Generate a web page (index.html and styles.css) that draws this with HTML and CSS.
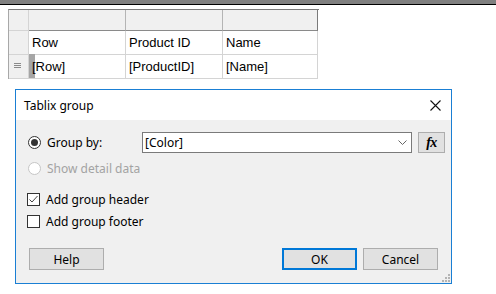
FILE: index.html
```html
<!DOCTYPE html>
<html>
<head>
<meta charset="utf-8">
<link rel="stylesheet" href="styles.css">
</head>
<body>
<div class="topbar"></div>
<div class="tablix">
  <div class="c hdr handle"></div>
  <div class="c hdr"></div>
  <div class="c hdr"></div>
  <div class="c hdr last"></div>
  <div class="c handle"></div>
  <div class="c">Row</div>
  <div class="c">Product ID</div>
  <div class="c last">Name</div>
  <div class="c handle">
    <svg width="7" height="6" viewBox="0 0 7 6"><path d="M0 0.5H7M0 2.5H7M0 4.5H7" stroke="#8a8a8a" stroke-width="1"/></svg>
  </div>
  <div class="c sel"><span class="selbar"></span><span class="seltext">[Row]</span></div>
  <div class="c">[ProductID]</div>
  <div class="c last">[Name]</div>
</div>

<div class="dialog">
  <div class="titlebar">
    <span class="title">Tablix group</span>
    <svg class="close" width="11" height="11" viewBox="0 0 11 11"><path d="M0.5 0.5L10.5 10.5M10.5 0.5L0.5 10.5" stroke="#111" stroke-width="1.1"/></svg>
  </div>
  <div class="body">
    <div class="row r1">
      <span class="radio on"></span>
      <span class="lbl">Group by:</span>
      <div class="combo">
        <span class="combo-text">[Color]</span>
        <svg class="chev" width="9" height="5" viewBox="0 0 9 5"><path d="M0.5 0.5L4.5 4.5L8.5 0.5" stroke="#666" fill="none" stroke-width="1"/></svg>
      </div>
      <div class="fx">fx</div>
    </div>
    <div class="row r2">
      <span class="radio dis"></span>
      <span class="lbl dis-t">Show detail data</span>
    </div>
    <div class="row r3">
      <span class="check">
        <svg width="11" height="11" viewBox="0 0 11 11"><path d="M1.5 5.5L4 8L9.5 2" stroke="#444" fill="none" stroke-width="1"/></svg>
      </span>
      <span class="lbl">Add group header</span>
    </div>
    <div class="row r4">
      <span class="check"></span>
      <span class="lbl">Add group footer</span>
    </div>
    <div class="row buttons">
      <div class="btn">Help</div>
      <div class="spacer"></div>
      <div class="btn ok">OK</div>
      <div class="btn">Cancel</div>
    </div>
    <svg class="grip" width="9" height="9" viewBox="0 0 9 9">
      <rect x="7" y="1" width="2" height="2" fill="#b4b4b4"/>
      <rect x="4" y="4" width="2" height="2" fill="#b4b4b4"/>
      <rect x="7" y="4" width="2" height="2" fill="#b4b4b4"/>
      <rect x="1" y="7" width="2" height="2" fill="#b4b4b4"/>
      <rect x="4" y="7" width="2" height="2" fill="#b4b4b4"/>
      <rect x="7" y="7" width="2" height="2" fill="#b4b4b4"/>
    </svg>
  </div>
</div>
</body>
</html>
```

FILE: styles.css
```css
html, body {
  margin: 0;
  padding: 0;
  background: #fff;
}
body {
  width: 496px;
  height: 294px;
  overflow: hidden;
  font-family: "Segoe UI", "Noto Sans", sans-serif;
}
.topbar {
  height: 4px;
  background: #808080;
  border-bottom: 1px solid #000;
}
.tablix {
  margin: 4px 0 0 8px;
  width: 310px;
  display: grid;
  grid-template-columns: 20px 97px 97px 95px;
  grid-template-rows: 21px 24px 24px;
  border-top: 1px solid #7a7a7a;
  border-left: 1px solid #a8a8a8;
  font-family: "Liberation Sans", Arial, sans-serif;
  font-size: 13px;
  color: #000;
}
.c {
  box-sizing: border-box;
  border-right: 1px solid #d4d4d4;
  border-bottom: 1px solid #d4d4d4;
  display: flex;
  align-items: center;
  padding-left: 3px;
  padding-bottom: 1px;
  position: relative;
}
.c.hdr {
  background: #f0f0f0;
  border-bottom: 1px solid #8a8a8a;
  border-right: 1px solid #b4b4b4;
}
.c.hdr.last {
  border-right: 1px solid #7a7a7a;
}
.c.hdr.handle {
  border-bottom: 1px solid #d4d4d4;
  border-right: 1px solid #d4d4d4;
}
.c.handle {
  background: #f0f0f0;
  padding-left: 5px;
}
.selbar {
  position: absolute;
  left: 0;
  top: -1px;
  width: 6px;
  height: 24px;
  background: #a6a6a6;
}
.seltext {
  position: relative;
}
.dialog {
  margin: 10px 0 0 15px;
  width: 437px;
  height: 195px;
  box-sizing: border-box;
  border: 1px solid #1a7fd4;
  background: #f0f0f0;
  display: flex;
  flex-direction: column;
}
.titlebar {
  height: 30px;
  background: #fff;
  display: flex;
  align-items: center;
  padding-left: 8px;
  padding-right: 10px;
}
.title {
  font-size: 12px;
  color: #000;
  flex: 1;
}
.close {
  display: block;
}
.body {
  position: relative;
  flex: 1;
  padding: 12px 13px 13px 12px;
  display: flex;
  flex-direction: column;
  font-size: 12px;
  color: #000;
}
.row {
  display: flex;
  align-items: center;
}
.r1 { height: 21px; }
.r2 { height: 20px; margin-top: 5px; }
.r3 { height: 20px; margin-top: 11px; }
.r4 { height: 20px; margin-top: 2px; }
.buttons { height: 22px; margin-top: 17px; padding-left: 1px; }
.radio {
  flex-shrink: 0;
  width: 13px;
  height: 13px;
  box-sizing: border-box;
  border: 1px solid #333;
  border-radius: 50%;
  background: #fff;
  display: flex;
  align-items: center;
  justify-content: center;
  margin-right: 6px;
}
.radio.on::after {
  content: "";
  width: 7px;
  height: 7px;
  border-radius: 50%;
  background: #333;
}
.radio.dis {
  border-color: #c6c6c6;
}
.dis-t {
  color: #a3a3a3;
}
.r1 .lbl {
  width: 95px;
  flex-shrink: 0;
}
.combo {
  flex-shrink: 0;
  width: 270px;
  height: 21px;
  box-sizing: border-box;
  border: 1px solid #7a7a7a;
  background: #fff;
  display: flex;
  align-items: center;
  padding-left: 2px;
  padding-right: 4px;
}
.combo-text {
  flex: 1;
}
.chev { display: block; }
.fx {
  flex-shrink: 0;
  margin-left: 6px;
  width: 27px;
  height: 21px;
  box-sizing: border-box;
  border: 1px solid #adadad;
  background: #e1e1e1;
  font-family: "Liberation Serif", "Times New Roman", serif;
  font-style: italic;
  font-weight: bold;
  font-size: 14px;
  display: flex;
  align-items: center;
  justify-content: center;
  letter-spacing: -0.5px;
}
.check {
  width: 13px;
  height: 13px;
  box-sizing: border-box;
  border: 1px solid #333;
  background: #fff;
  margin-left: -1px;
  margin-right: 6px;
  display: flex;
  align-items: center;
  justify-content: center;
}
.check svg { display: block; }
.btn {
  width: 75px;
  height: 22px;
  box-sizing: border-box;
  border: 1px solid #adadad;
  background: #e1e1e1;
  display: flex;
  align-items: center;
  justify-content: center;
}
.btn.ok {
  border: 2px solid #0078d7;
  margin-right: 6px;
}
.spacer { flex: 1; }
.grip {
  position: absolute;
  right: 1px;
  bottom: 1px;
}
```
